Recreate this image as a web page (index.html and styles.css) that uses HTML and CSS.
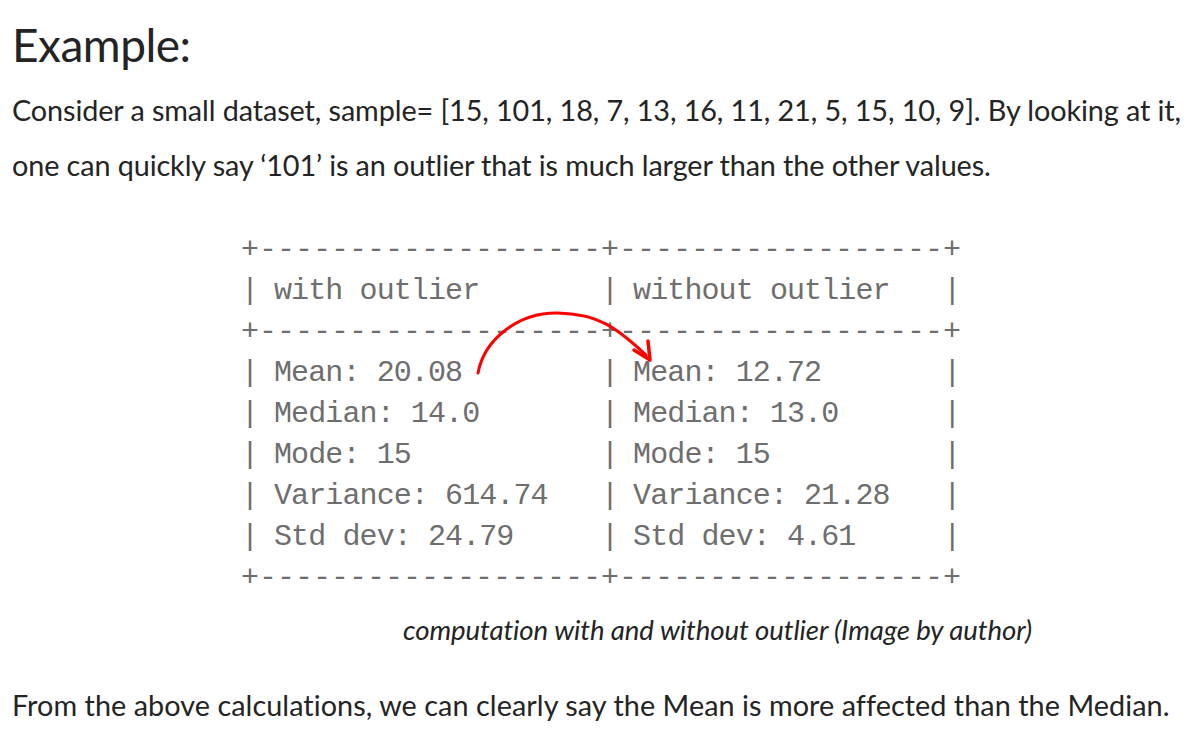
FILE: index.html
```html
<!DOCTYPE html>
<html>
<head>
<meta charset="utf-8">
<link rel="stylesheet" href="styles.css">
</head>
<body>
<main class="article">
  <h1 class="heading">Example:</h1>
  <p class="para">Consider a small dataset, sample= [15, 101, 18, 7, 13, 16, 11, 21, 5, 15, 10, 9]. By looking at it, one can quickly say ‘101’ is an outlier that is much larger than the other values.</p>
  <figure class="figure">
    <div class="table-wrap">
      <div class="ascii">
        <div class="ln">+-------------------+------------------+</div>
        <div class="ln"><span class="bar">|</span><span class="cell c1">with outlier</span><span class="bar">|</span><span class="cell c2">without outlier</span><span class="bar">|</span></div>
        <div class="ln">+-------------------+------------------+</div>
        <div class="ln"><span class="bar">|</span><span class="cell c1">Mean: 20.08</span><span class="bar">|</span><span class="cell c2">Mean: 12.72</span><span class="bar">|</span></div>
        <div class="ln"><span class="bar">|</span><span class="cell c1">Median: 14.0</span><span class="bar">|</span><span class="cell c2">Median: 13.0</span><span class="bar">|</span></div>
        <div class="ln"><span class="bar">|</span><span class="cell c1">Mode: 15</span><span class="bar">|</span><span class="cell c2">Mode: 15</span><span class="bar">|</span></div>
        <div class="ln"><span class="bar">|</span><span class="cell c1">Variance: 614.74</span><span class="bar">|</span><span class="cell c2">Variance: 21.28</span><span class="bar">|</span></div>
        <div class="ln"><span class="bar">|</span><span class="cell c1">Std dev: 24.79</span><span class="bar">|</span><span class="cell c2">Std dev: 4.61</span><span class="bar">|</span></div>
        <div class="ln">+-------------------+------------------+</div>
      </div>
      <svg class="arrow" width="200" height="80" viewBox="470 300 200 80">
        <path d="M478,366 C484,333 518,305 558,306 C598,307 616,320 646,348" fill="none" stroke="#ff0000" stroke-width="3" stroke-linecap="round"/>
        <path d="M634,343 L650,353 L648,334" fill="none" stroke="#ff0000" stroke-width="3.5" stroke-linecap="round" stroke-linejoin="round"/>
      </svg>
    </div>
    <figcaption class="caption">computation with and without outlier (Image by author)</figcaption>
  </figure>
  <p class="para last">From the above calculations, we can clearly say the Mean is more affected than the Median.</p>
</main>
</body>
</html>
```

FILE: styles.css
```css
html, body {
  margin: 0;
  padding: 0;
  background: #ffffff;
}
.article {
  padding: 0 6px 0 12px;
  font-family: Lato, "Noto Sans", sans-serif;
  color: #242424;
}
.heading {
  font-weight: 400;
  font-size: 46px;
  line-height: 56px;
  margin: 17px 0 0 0;
  letter-spacing: -0.5px;
}
.para {
  font-size: 28.8px;
  line-height: 55px;
  margin: 10px 0 0 0;
  letter-spacing: -0.1px;
}
.figure {
  margin: 37px 0 0 0;
}
.table-wrap {
  position: relative;
  margin-left: 229px;
}
.ascii {
  font-family: "Liberation Mono", "Courier New", monospace;
  font-size: 30px;
  line-height: 41px;
  color: #6e6e6e;
}
.ln {
  white-space: pre;
  height: 41px;
}
.cell {
  display: inline-block;
  box-sizing: border-box;
  letter-spacing: -0.9px;
}
.c1 {
  width: 19ch;
  padding-left: calc(1ch - 3px);
}
.c2 {
  width: 18ch;
  padding-left: calc(1ch - 4px);
}
.arrow {
  position: absolute;
  left: 229px;
  top: 77px;
}
.caption {
  margin: 14px 0 0 391px;
  font-style: italic;
  font-size: 27.6px;
  line-height: 34px;
  letter-spacing: -0.1px;
}
.last {
  margin-top: 31px;
  letter-spacing: 0.05px;
}
```
